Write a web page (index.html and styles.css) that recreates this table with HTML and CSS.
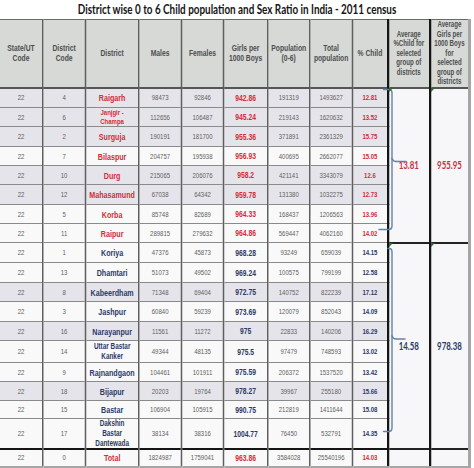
FILE: index.html
```html
<!DOCTYPE html>
<html>
<head>
<meta charset="utf-8">
<title>District wise 0 to 6 Child population</title>
<link rel="stylesheet" href="styles.css">
</head>
<body>
<div class="frame">
<div class="sheet">
  <div class="title">District wise 0 to 6 Child population and Sex Ratio in India - 2011 census</div>
  <table class="grid">
    <colgroup>
      <col class="c-state"><col class="c-code"><col class="c-dist"><col class="c-males"><col class="c-fem"><col class="c-ratio"><col class="c-pop"><col class="c-tot"><col class="c-pct"><col class="c-avg1"><col class="c-avg2">
    </colgroup>
    <thead>
      <tr class="head">
        <th>State/UT<br>Code</th>
        <th>District<br>Code</th>
        <th>District</th>
        <th>Males</th>
        <th>Females</th>
        <th>Girls per<br>1000 Boys</th>
        <th>Population<br>(0-6)</th>
        <th>Total<br>population</th>
        <th>% Child</th>
        <th class="avg">Average<br>%Child for<br>selected<br>group of<br>districts</th>
        <th class="avg edge">Average<br>Girls per<br>1000 Boys<br>for<br>selected<br>group of<br>districts</th>
      </tr>
    </thead>
    <tbody>
      <tr class="g1 shade h20">
        <td>22</td><td>4</td><td class="name">Raigarh</td><td>98473</td><td>92846</td><td class="ratio">942.86</td><td>191319</td><td>1493627</td><td class="pct">12.81</td>
        <td class="merged red-val" rowspan="8">13.81</td><td class="merged red-val edge" rowspan="8">955.95</td>
      </tr>
      <tr class="g1 shade">
        <td>22</td><td>6</td><td class="name multi">Janjgir -<br>Champa</td><td>112656</td><td>106487</td><td class="ratio">945.24</td><td>219143</td><td>1620632</td><td class="pct">13.52</td>
      </tr>
      <tr class="g1 shade h20">
        <td>22</td><td>2</td><td class="name">Surguja</td><td>190191</td><td>181700</td><td class="ratio">955.36</td><td>371891</td><td>2361329</td><td class="pct">15.75</td>
      </tr>
      <tr class="g1">
        <td>22</td><td>7</td><td class="name">Bilaspur</td><td>204757</td><td>195938</td><td class="ratio">956.93</td><td>400695</td><td>2662077</td><td class="pct">15.05</td>
      </tr>
      <tr class="g1 shade">
        <td>22</td><td>10</td><td class="name">Durg</td><td>215065</td><td>206076</td><td class="ratio">958.2</td><td>421141</td><td>3343079</td><td class="pct">12.6</td>
      </tr>
      <tr class="g1 shade h20">
        <td>22</td><td>12</td><td class="name">Mahasamund</td><td>67038</td><td>64342</td><td class="ratio">959.78</td><td>131380</td><td>1032275</td><td class="pct">12.73</td>
      </tr>
      <tr class="g1">
        <td>22</td><td>5</td><td class="name">Korba</td><td>85748</td><td>82689</td><td class="ratio">964.33</td><td>168437</td><td>1206563</td><td class="pct">13.96</td>
      </tr>
      <tr class="g1">
        <td>22</td><td>11</td><td class="name">Raipur</td><td>289815</td><td>279632</td><td class="ratio">964.86</td><td>569447</td><td>4062160</td><td class="pct">14.02</td>
      </tr>
      <tr class="g2 h20">
        <td>22</td><td>1</td><td class="name">Koriya</td><td>47376</td><td>45873</td><td class="ratio">968.28</td><td>93249</td><td>659039</td><td class="pct">14.15</td>
        <td class="merged blue-val" rowspan="10">14.58</td><td class="merged blue-val edge" rowspan="10">978.38</td>
      </tr>
      <tr class="g2 h20">
        <td>22</td><td>13</td><td class="name">Dhamtari</td><td>51073</td><td>49502</td><td class="ratio">969.24</td><td>100575</td><td>799199</td><td class="pct">12.58</td>
      </tr>
      <tr class="g2 shade">
        <td>22</td><td>8</td><td class="name">Kabeerdham</td><td>71348</td><td>69404</td><td class="ratio">972.75</td><td>140752</td><td>822239</td><td class="pct">17.12</td>
      </tr>
      <tr class="g2 h20">
        <td>22</td><td>3</td><td class="name">Jashpur</td><td>60840</td><td>59239</td><td class="ratio">973.69</td><td>120079</td><td>852043</td><td class="pct">14.09</td>
      </tr>
      <tr class="g2 shade">
        <td>22</td><td>16</td><td class="name">Narayanpur</td><td>11561</td><td>11272</td><td class="ratio">975</td><td>22833</td><td>140206</td><td class="pct">16.29</td>
      </tr>
      <tr class="g2 h22">
        <td>22</td><td>14</td><td class="name multi wide">Uttar Bastar<br>Kanker</td><td>49344</td><td>48135</td><td class="ratio">975.5</td><td>97479</td><td>748593</td><td class="pct">13.02</td>
      </tr>
      <tr class="g2">
        <td>22</td><td>9</td><td class="name">Rajnandgaon</td><td>104461</td><td>101911</td><td class="ratio">975.59</td><td>206372</td><td>1537520</td><td class="pct">13.42</td>
      </tr>
      <tr class="g2 shade">
        <td>22</td><td>18</td><td class="name">Bijapur</td><td>20203</td><td>19764</td><td class="ratio">978.27</td><td>39967</td><td>255180</td><td class="pct">15.66</td>
      </tr>
      <tr class="g2 h18">
        <td>22</td><td>15</td><td class="name">Bastar</td><td>106904</td><td>105915</td><td class="ratio">990.75</td><td>212819</td><td>1411644</td><td class="pct">15.08</td>
      </tr>
      <tr class="g2 h29">
        <td>22</td><td>17</td><td class="name multi wide">Dakshin<br>Bastar<br>Dantewada</td><td>38134</td><td>38316</td><td class="ratio">1004.77</td><td>76450</td><td>532791</td><td class="pct">14.35</td>
      </tr>
      <tr class="g1 total h18">
        <td>22</td><td>0</td><td class="name">Total</td><td>1824987</td><td>1759041</td><td class="ratio">963.86</td><td>3584028</td><td>25540196</td><td class="pct">14.03</td>
        <td class="merged blank"></td><td class="merged blank edge"></td>
      </tr>
    </tbody>
  </table>
</div>
<svg class="marks" width="474" height="468" viewBox="0 0 474 468" aria-hidden="true">
  <g fill="none" stroke="#6283a8" stroke-width="1.4" stroke-linecap="round">
    <path d="M383.5 89.5 H389 Q392 89.5 392 93 V226 Q392 229.5 388.5 229.5 H379"/>
    <path d="M392 158.5 Q393 161.5 396 161.5 H406"/>
    <path d="M388 248.5 H389 Q392 248.5 392 252 V428 Q392 431.5 388.5 431.5 H383.5"/>
    <path d="M392 336 Q393 339 396 339 H405"/>
  </g>
  <g fill="#2f6a2f">
    <polygon points="389,88 393,88 389,92"/>
    <polygon points="431,88 435,88 431,92"/>
    <polygon points="389,243 393,243 389,247"/>
    <polygon points="431,243 435,243 431,247"/>
  </g>
</svg>
</div>
</body>
</html>
```

FILE: styles.css
```css
html, body {
  margin: 0;
  padding: 0;
  background: #ffffff;
  overflow: hidden;
}

.frame {
  position: relative;
  width: 474px;
  height: 468px;
  overflow: hidden;
}

/* the reference is horizontally compressed; lay out at full width then squeeze */
.sheet {
  width: 628px;
  transform: scaleX(0.75);
  transform-origin: 0 0;
  font-family: "Liberation Sans", Arial, sans-serif;
}

.title {
  height: 19px;
  line-height: 19px;
  text-align: center;
  padding-left: 4px;
  font-family: Lato, "Open Sans", sans-serif;
  font-weight: 700;
  font-size: 13.2px;
  color: #151515;
  white-space: nowrap;
}

.grid {
  border-collapse: collapse;
  table-layout: fixed;
  width: 626px;
}

.c-state { width: 57px; }
.c-code  { width: 57px; }
.c-dist  { width: 71px; }
.c-males { width: 57px; }
.c-fem   { width: 56px; }
.c-ratio { width: 59px; }
.c-pop   { width: 56px; }
.c-tot   { width: 57px; }
.c-pct   { width: 47px; }
.c-avg1  { width: 56px; }
.c-avg2  { width: 53px; }

.grid th,
.grid td {
  padding: 0 1px;
  text-align: center;
  vertical-align: middle;
  white-space: nowrap;
  border-left: 2px solid #5f5f5f;
  border-right: 2px solid #5f5f5f;
  border-top: 1px solid #8a8a8a;
  border-bottom: 1px solid #8a8a8a;
  overflow: hidden;
}

.grid tr > :first-child {
  border-left: none;
}

.head {
  height: 68px;
}

.head th {
  background: #d6d9d6;
  color: #4d4d4d;
  font-size: 9px;
  font-weight: 700;
  line-height: 10.4px;
  border-top: 1px solid #6a6a6a;
  border-bottom: 2px solid #555555;
}

.head th.avg {
  line-height: 9.5px;
  font-size: 8.2px;
}

tbody tr { height: 19px; }
tbody tr.h20 { height: 20px; }
tbody tr.h22 { height: 22px; }
tbody tr.h18 { height: 18px; }
tbody tr.h29 { height: 29px; }

.grid td {
  background: #f9f9f9;
  color: #5e5e5e;
  font-size: 8px;
  line-height: 9.4px;
}

.grid .shade td {
  background: #e6e4eb;
}

.grid td.name {
  font-size: 9.5px;
  font-weight: 700;
  line-height: 11px;
}

.grid td.name.multi {
  font-size: 8px;
  line-height: 9.2px;
}

.grid td.name.wide {
  font-size: 8.5px;
  line-height: 9.6px;
}

.grid td.ratio {
  font-size: 9px;
  font-weight: 700;
  line-height: 10.4px;
}

.grid td.pct {
  font-size: 8px;
  font-weight: 700;
}

.g1 .name, .g1 .ratio, .g1 .pct { color: #d12c38; }
.g2 .name, .g2 .ratio, .g2 .pct { color: #2b3a67; }

.grid td.merged {
  background: #f7f6f8;
  font-family: Lato, "Open Sans", sans-serif;
  font-weight: 700;
  font-size: 10.5px;
  line-height: 13px;
  border-top: 2px solid #222222;
  border-bottom: 2px solid #222222;
}

.grid td.red-val { color: #c8303a; }
.grid td.blue-val { color: #2b3a67; }

.grid .avg,
.grid td.merged {
  border-left: 3px solid #161616;
}

.grid .edge {
  border-right: 4px solid #a6a6a6;
}

.grid .total td {
  border-top: 2px solid #151515;
  border-bottom: 3px solid #a6a6a6;
}

.marks {
  position: absolute;
  top: 0;
  left: 0;
  pointer-events: none;
}
```
